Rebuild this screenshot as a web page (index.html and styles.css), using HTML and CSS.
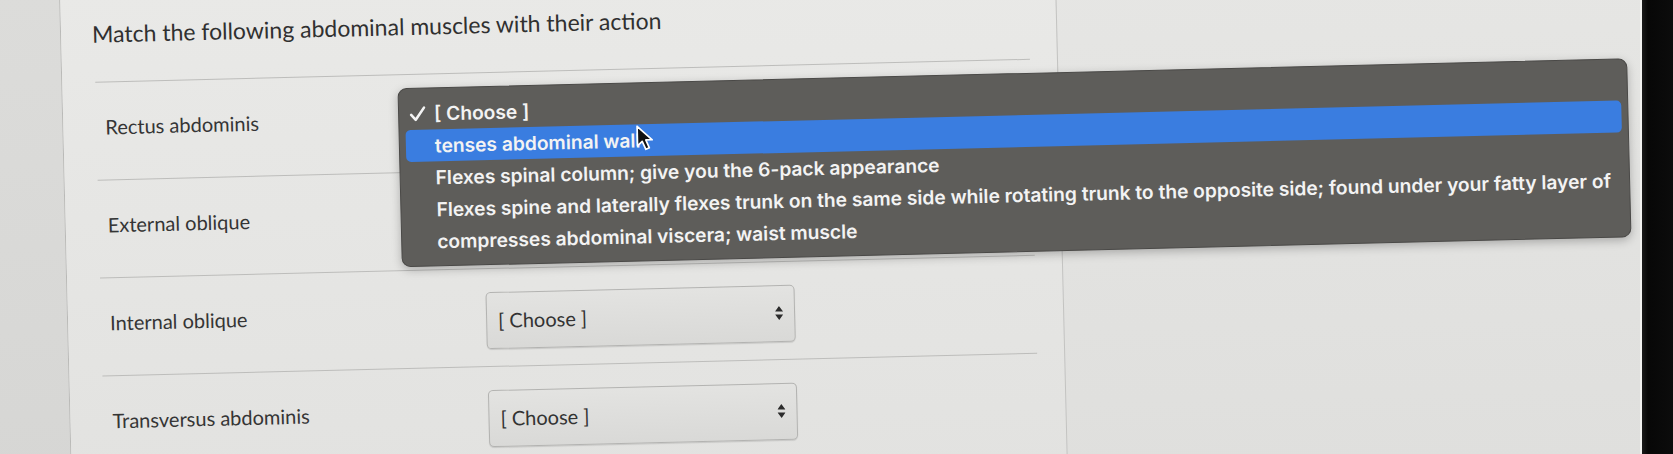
FILE: index.html
```html
<!DOCTYPE html>
<html lang="en">
<head>
<meta charset="utf-8">
<title>Match abdominal muscles</title>
<link rel="stylesheet" href="styles.css">
</head>
<body>
<div class="screen">
  <div class="viewport">
    <div class="page">
      <div class="gutter"></div>
      <main class="content">
        <h1 class="title">Match the following abdominal muscles with their action</h1>
        <div class="rows">
          <div class="row">
            <div class="label">Rectus abdominis</div>
            <div class="select"><span>[ Choose ]</span><svg class="arrows" viewBox="0 0 8 14" width="8" height="14"><path d="M4 0 L8 5.5 L0 5.5 Z M0 8.5 L8 8.5 L4 14 Z"/></svg></div>
          </div>
          <div class="row">
            <div class="label">External oblique</div>
            <div class="select"><span>[ Choose ]</span><svg class="arrows" viewBox="0 0 8 14" width="8" height="14"><path d="M4 0 L8 5.5 L0 5.5 Z M0 8.5 L8 8.5 L4 14 Z"/></svg></div>
          </div>
          <div class="row">
            <div class="label">Internal oblique</div>
            <div class="select"><span>[ Choose ]</span><svg class="arrows" viewBox="0 0 8 14" width="8" height="14"><path d="M4 0 L8 5.5 L0 5.5 Z M0 8.5 L8 8.5 L4 14 Z"/></svg></div>
          </div>
          <div class="row">
            <div class="label">Transversus abdominis</div>
            <div class="select"><span>[ Choose ]</span><svg class="arrows" viewBox="0 0 8 14" width="8" height="14"><path d="M4 0 L8 5.5 L0 5.5 Z M0 8.5 L8 8.5 L4 14 Z"/></svg></div>
          </div>
        </div>

        <div class="menu">
          <div class="item"><span class="check"><svg viewBox="0 0 17 16" width="17" height="16"><path d="M2 9 L6.5 14 L15 2" fill="none" stroke="#f3f3f3" stroke-width="2.6" stroke-linecap="round" stroke-linejoin="round"/></svg></span><span>[ Choose ]</span></div>
          <div class="item active"><span class="check"></span><span>tenses abdominal wall</span></div>
          <div class="item"><span class="check"></span><span>Flexes spinal column; give you the 6-pack appearance</span></div>
          <div class="item"><span class="check"></span><span>Flexes spine and laterally flexes trunk on the same side while rotating trunk to the opposite side; found under your fatty layer of</span></div>
          <div class="item"><span class="check"></span><span>compresses abdominal viscera; waist muscle</span></div>
        </div>

        <svg class="cursor" viewBox="0 0 17 26" width="18" height="28">
          <path d="M1.5 1.5 L1.5 20 L6 15.8 L9.3 23.5 L12.6 22.1 L9.4 14.6 L15.5 14.6 Z" fill="#111" stroke="#fff" stroke-width="1.6" stroke-linejoin="round"/>
        </svg>
      </main>
      <div class="rightpane"></div>
    </div>
  </div>
  <div class="bezel"></div>
</div>
</body>
</html>
```

FILE: styles.css
```css
html, body {
  margin: 0;
  padding: 0;
  height: 100%;
}

body {
  background: #0c0c0c;
  overflow: hidden;
  font-family: Lato, "Open Sans", sans-serif;
}

.screen {
  display: flex;
  width: 1673px;
  height: 454px;
}

.viewport {
  flex: 0 0 1640px;
  height: 454px;
  overflow: hidden;
  background: #e2e2e0;
}

.bezel {
  flex: 1;
  background: linear-gradient(90deg, #1a1a1a 0, #070707 6px, #0c0c0c 100%);
  border-left: 2px solid #f2f2f0;
}

.page {
  display: flex;
  width: 1660px;
  height: 504px;
  margin: -25px 0 0 -10px;
  transform: rotate(-1.4deg);
  transform-origin: 50% 50%;
}

.gutter {
  flex: 0 0 76px;
  box-sizing: border-box;
  background: linear-gradient(180deg, #dcdcda, #d6d6d4);
  border-right: 1px solid #b9b9b7;
}

.content {
  flex: 0 0 996px;
  box-sizing: border-box;
  position: relative;
  padding: 25px 27px 0 33px;
  background: linear-gradient(180deg, #e9e9e7 0, #e5e5e3 60%, #e2e2e0 100%);
  border-right: 1px solid #c3c3c1;
}

.rightpane {
  flex: 1;
  background: linear-gradient(180deg, #e6e6e4, #dfdfdd);
}

.title {
  margin: 2px 0 34px -2px;
  font-size: 23px;
  font-weight: 400;
  line-height: 28px;
  color: #303030;
  white-space: nowrap;
}

.row {
  display: grid;
  grid-template-columns: 385px 309px;
  border-top: 1px solid #bdbdbb;
  padding: 23px 0 17px;
}

.label {
  padding-left: 9px;
  margin-top: 9px;
  font-size: 20px;
  line-height: 24px;
  color: #353535;
}

.select {
  box-sizing: border-box;
  height: 57px;
  display: flex;
  align-items: center;
  justify-content: space-between;
  padding: 0 11px 2px 11px;
  border: 1px solid #b3b3b1;
  border-radius: 5px;
  background: linear-gradient(180deg, #e3e3e1, #d9d9d7);
  box-shadow: 0 1px 1px rgba(0, 0, 0, 0.12);
  font-size: 20px;
  color: #333;
}

.arrows {
  fill: #2c2c2c;
}

.menu {
  position: absolute;
  left: 335px;
  top: 103px;
  width: 1230px;
  height: 179px;
  box-sizing: border-box;
  padding: 9px 6px 8px;
  background: #5e5d5a;
  border: 1px solid #4a4947;
  border-radius: 9px;
  box-shadow: 0 3px 10px rgba(0, 0, 0, 0.25);
  font-family: Inter, "Noto Sans", sans-serif;
  font-weight: 600;
  font-size: 19.2px;
  color: #f3f3f3;
}

.item {
  height: 32px;
  display: flex;
  align-items: center;
  padding-left: 4px;
  border-radius: 5px;
  white-space: nowrap;
}

.item.active {
  background: #3a7de0;
}

.check {
  flex: 0 0 25px;
  display: flex;
  align-items: center;
}

.cursor {
  position: absolute;
  left: 572px;
  top: 145px;
}
```
